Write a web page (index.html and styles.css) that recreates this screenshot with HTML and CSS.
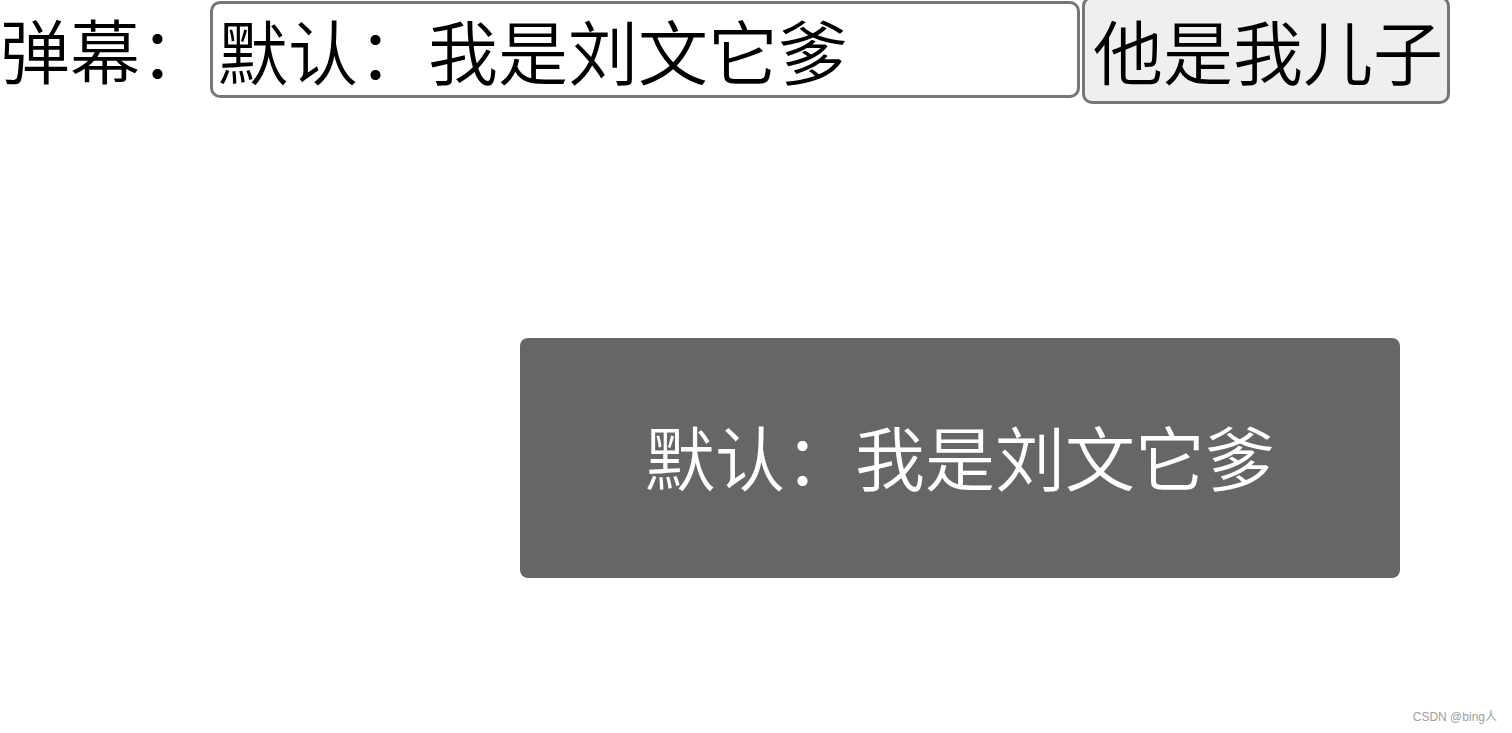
FILE: index.html
```html
<!DOCTYPE html>
<html lang="zh">
<head>
<meta charset="utf-8">
<title>弹幕</title>
<link rel="stylesheet" href="styles.css">
</head>
<body>
<div class="bar">
  <label class="label" for="msg">弹幕：</label><input id="msg" class="input" type="text" value="默认：我是刘文它爹"><button class="btn">他是我儿子</button>
</div>
<div class="screen">
  <div class="danmu">默认：我是刘文它爹</div>
</div>
<div class="mark">CSDN @bing人</div>
</body>
</html>
```
FILE: styles.css
```css
html, body {
  margin: 0;
  padding: 0;
  background: #ffffff;
}
body {
  font-family: "Noto Sans CJK SC", "Noto Sans", sans-serif;
  font-weight: 350;
  height: 733px;
  overflow: hidden;
  position: relative;
}
.bar {
  display: flex;
  align-items: flex-start;
  margin-top: -4px;
  height: 107px;
}
.label {
  font-size: 70px;
  line-height: 1;
  margin-top: 18px;
  width: 210px;
  color: #000;
  font-family: "Noto Sans CJK SC", sans-serif;
  font-weight: 350;
}
.input {
  box-sizing: border-box;
  width: 870px;
  height: 97px;
  margin-top: 5px;
  border: 3px solid #767676;
  border-radius: 10px;
  padding: 0 5px;
  font-size: 70px;
  font-family: "Noto Sans CJK SC", sans-serif;
  font-weight: 350;
  color: #000;
  background: #fff;
  outline: none;
}
.btn {
  box-sizing: border-box;
  margin-left: 2px;
  height: 108px;
  border: 3px solid #767676;
  border-radius: 10px;
  background: #efefef;
  padding: 0 4px 0 8px;
  font-size: 70px;
  font-family: "Noto Sans CJK SC", sans-serif;
  font-weight: 350;
  color: #000;
  line-height: 1;
}
.screen {
  padding-top: 235px;
  padding-left: 520px;
}
.danmu {
  box-sizing: border-box;
  width: 880px;
  height: 240px;
  padding-bottom: 4px;
  background: #666666;
  border-radius: 8px;
  color: #ffffff;
  font-size: 70px;
  font-weight: 350;
  display: flex;
  align-items: center;
  justify-content: center;
  line-height: 1;
}
.mark {
  position: absolute;
  right: 15px;
  bottom: 9px;
  font-family: "Liberation Sans", "Noto Sans CJK SC", sans-serif;
  font-weight: 400;
  font-size: 12px;
  color: #a0a0a0;
}
```
